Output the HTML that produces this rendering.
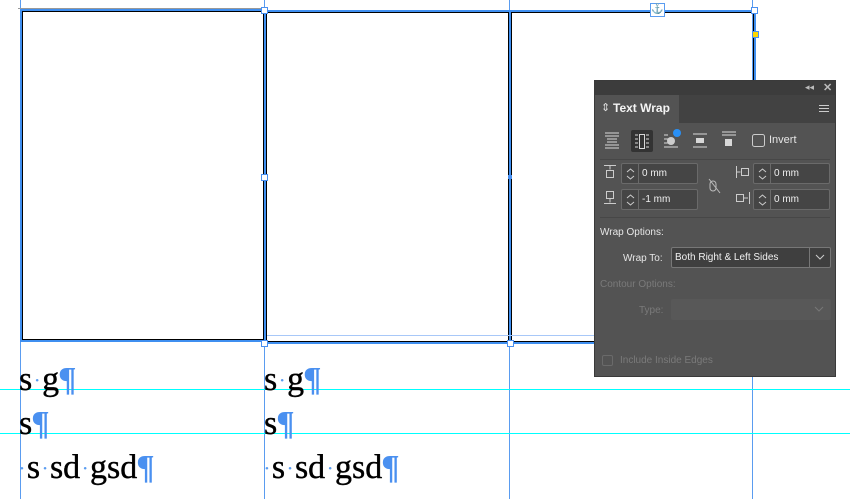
<!DOCTYPE html>
<html><head><meta charset="utf-8"><style>
*{margin:0;padding:0;box-sizing:border-box}
body{width:850px;height:499px;background:#fff;position:relative;overflow:hidden;font-family:"Liberation Sans",sans-serif}
.a{position:absolute}
.vl{position:absolute;width:1px;background:#5a9cf0;top:0;height:499px}
.hd{position:absolute;width:7px;height:7px;border:1px solid #4a90f0;background:#fff}
.txt{position:absolute;font-family:"Liberation Serif",serif;font-size:34px;color:#000;white-space:nowrap;line-height:1;-webkit-text-stroke:0.4px #000}
.p{color:#4a90f0;font-weight:bold;-webkit-text-stroke:0;margin-left:-1px}
.d{color:#5a9cf0;font-size:11px;vertical-align:6px;margin:0 3px;-webkit-text-stroke:0}
.fr{position:absolute;border:2px solid #3f8ff0;box-shadow:inset 1px 1px 0 #000,inset -1px -1px 0 #000}
.pan{position:absolute;left:594px;top:80px;width:242px;height:297px;background:#535353;border:1px solid #3a3a3a}
.lbl{position:absolute;color:#e6e6e6;font-size:10px;white-space:nowrap}
.dim{color:#7a7a7a}
.fld{position:absolute;background:#454545;border:1px solid #6a6a6a;border-radius:2px;height:21px}
.fld span{position:absolute;left:20px;top:4px;color:#f0f0f0;font-size:10px}
.fld i{position:absolute;left:16px;top:0;width:1px;height:19px;background:#6a6a6a}
.fld svg{position:absolute;left:3px;top:2px}
</style></head><body>
<div class="vl" style="left:20px"></div>
<div class="vl" style="left:264px"></div>
<div class="vl" style="left:509px"></div>
<div class="vl" style="left:752px"></div>
<div class="a" style="left:0;top:389px;width:850px;height:1px;background:#00ffff"></div>
<div class="a" style="left:0;top:433px;width:850px;height:1px;background:#00ffff"></div>
<div class="a" style="left:18px;top:8px;width:248px;height:1px;background:#999"></div>
<div class="fr" style="left:20px;top:9px;width:246px;height:333px"></div>
<div class="fr" style="left:264px;top:10px;width:247px;height:334px"></div>
<div class="fr" style="left:509px;top:10px;width:247px;height:334px"></div>
<div class="a" style="left:267px;top:335px;width:485px;height:1px;background:#a8c8f8"></div>
<div class="hd" style="left:261px;top:7px"></div>
<div class="hd" style="left:751px;top:7px"></div>
<div class="hd" style="left:261px;top:174px"></div>
<div class="hd" style="left:261px;top:340px"></div>
<div class="hd" style="left:507px;top:340px"></div>
<div class="a" style="left:508px;top:175px;width:4px;height:4px;background:#4a90f0"></div>
<div class="a" style="left:752px;top:31px;width:7px;height:7px;background:#ffd800;border:1px solid #4a90f0"></div>
<div class="a" style="left:650px;top:3px;width:15px;height:14px;border:1px solid #5a9cf0;background:#fff;color:#8ab4f8;font-size:10px;text-align:center;line-height:12px">⚓</div>
<div class="txt" style="left:19px;top:363px">s<span class="d">•</span>g<span class="p">¶</span></div>
<div class="txt" style="left:264px;top:363px">s<span class="d">•</span>g<span class="p">¶</span></div>
<div class="txt" style="left:19px;top:407px">s<span class="p">¶</span></div>
<div class="txt" style="left:264px;top:407px">s<span class="p">¶</span></div>
<div class="txt" style="left:19px;top:451px"><span class="d" style="margin-left:1px">•</span>s<span class="d">•</span>sd<span class="d">•</span>gsd<span class="p">¶</span></div>
<div class="txt" style="left:264px;top:451px"><span class="d" style="margin-left:1px">•</span>s<span class="d">•</span>sd<span class="d">•</span>gsd<span class="p">¶</span></div>
<div class="pan">
 <div class="a" style="left:0;top:0;width:240px;height:14px;background:#3c3c3c"></div>
 <div class="lbl" style="left:210px;top:1px;color:#bbb;font-size:9px">◂◂</div>
 <div class="lbl" style="left:228px;top:0px;color:#bbb;font-size:11px;font-weight:bold">✕</div>
 <div class="a" style="left:0;top:14px;width:240px;height:28px;background:#424242"></div>
 <div class="a" style="left:0;top:14px;width:84px;height:29px;background:#535353"></div>
 <div class="lbl" style="left:6px;top:20px;font-size:11px;color:#ddd">⇕</div>
 <div class="lbl" style="left:18px;top:20px;font-size:12px;color:#f4f4f4;font-weight:bold">Text Wrap</div>
 <div class="a" style="left:224px;top:24px;width:10px;height:7px;border-top:1px solid #ccc;border-bottom:1px solid #ccc"><div style="margin-top:2px;height:1px;background:#ccc"></div></div>
 <svg class="a" style="left:0;top:44px" width="240" height="30">
  <g stroke="#d8d8d8" stroke-width="1"><path d="M10 8h14M10 11h14M12 14h10M12 17h10M10 20h14M10 23h14"/></g>
  <rect x="36" y="5" width="22" height="22" rx="2" fill="#333"/>
  <g stroke="#d8d8d8" fill="none"><path d="M40 10h3M40 14h3M40 18h3M40 22h3M51 10h3M51 14h3M51 18h3M51 22h3"/><rect x="44.5" y="9.5" width="5" height="14"/></g>
  <g stroke="#d8d8d8"><path d="M69 10h4M69 14h4M69 18h4M69 22h14"/></g>
  <circle cx="76" cy="16" r="4" fill="#ccc"/>
  <circle cx="82" cy="8" r="4" fill="#2a90f5"/>
  <g stroke="#d8d8d8"><path d="M98 9h14M98 22h14"/></g><rect x="101" y="13" width="8" height="5" fill="#d8d8d8"/>
  <g stroke="#d8d8d8"><path d="M127 7h14M127 10h14"/></g><rect x="130" y="14" width="7" height="7" fill="#d8d8d8"/>
  <rect x="157.5" y="9.5" width="12" height="12" rx="2" fill="none" stroke="#ccc"/>
 </svg>
 <div class="lbl" style="left:174px;top:53px;font-size:11px">Invert</div>
 <div class="a" style="left:5px;top:78px;width:230px;height:1px;background:#474747"></div>
 <svg class="a" style="left:8px;top:83px" width="16" height="46" fill="none" stroke="#ccc">
  <path d="M1 1.5h12M7 1.5v4"/><rect x="3.5" y="6.5" width="7" height="7"/>
  <rect x="3.5" y="27.5" width="7" height="7"/><path d="M7 34.5v4M1 39.5h12"/>
 </svg>
 <div class="fld" style="left:26px;top:82px;width:77px"><svg width="11" height="16" fill="none" stroke="#ccc"><path d="M2 6l3.5-3 3.5 3M2 10l3.5 3 3.5-3"/></svg><i></i><span>0 mm</span></div>
 <div class="fld" style="left:26px;top:108px;width:77px"><svg width="11" height="16" fill="none" stroke="#ccc"><path d="M2 6l3.5-3 3.5 3M2 10l3.5 3 3.5-3"/></svg><i></i><span>-1 mm</span></div>
 <svg class="a" style="left:112px;top:96px" width="14" height="18" fill="none" stroke="#bbb"><path d="M2 2l11 14"/><rect x="3" y="4" width="6" height="10" rx="3"/></svg>
 <svg class="a" style="left:140px;top:85px" width="16" height="40" fill="none" stroke="#ccc">
  <path d="M1.5 0v12M1.5 6h4"/><rect x="6.5" y="2.5" width="7" height="7"/>
  <rect x="1.5" y="28.5" width="7" height="7"/><path d="M9 32h4M14.5 26v12"/>
 </svg>
 <div class="fld" style="left:158px;top:82px;width:77px"><svg width="11" height="16" fill="none" stroke="#ccc"><path d="M2 6l3.5-3 3.5 3M2 10l3.5 3 3.5-3"/></svg><i></i><span>0 mm</span></div>
 <div class="fld" style="left:158px;top:108px;width:77px"><svg width="11" height="16" fill="none" stroke="#ccc"><path d="M2 6l3.5-3 3.5 3M2 10l3.5 3 3.5-3"/></svg><i></i><span>0 mm</span></div>
 <div class="a" style="left:5px;top:136px;width:230px;height:1px;background:#474747"></div>
 <div class="lbl" style="left:5px;top:146px">Wrap Options:</div>
 <div class="lbl" style="left:28px;top:172px">Wrap To:</div>
 <div class="a" style="left:76px;top:166px;width:160px;height:21px;background:#3f3f3f;border:1px solid #777;border-radius:2px">
  <div class="lbl" style="left:3px;top:4px;color:#f0f0f0">Both Right &amp; Left Sides</div>
  <div class="a" style="left:137px;top:0;width:1px;height:19px;background:#777"></div>
  <svg class="a" style="left:143px;top:6px" width="10" height="6" fill="none" stroke="#ccc"><path d="M1 1l4 4 4-4"/></svg>
 </div>
 <div class="lbl dim" style="left:5px;top:198px">Contour Options:</div>
 <div class="lbl dim" style="left:44px;top:224px">Type:</div>
 <div class="a" style="left:76px;top:218px;width:160px;height:21px;background:#585858;border-radius:2px"><svg class="a" style="left:143px;top:7px" width="10" height="6" fill="none" stroke="#777"><path d="M1 1l4 4 4-4"/></svg></div>
 <div class="a" style="left:7px;top:274px;width:11px;height:11px;border:1px solid #6a6a6a;border-radius:2px"></div>
 <div class="lbl dim" style="left:25px;top:274px">Include Inside Edges</div>
</div>
</body></html>
